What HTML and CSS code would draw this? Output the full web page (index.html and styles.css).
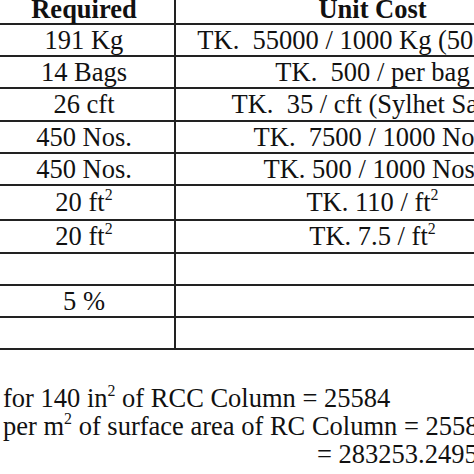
FILE: index.html
```html
<!DOCTYPE html>
<html>
<head>
<meta charset="utf-8">
<link rel="stylesheet" href="styles.css">
</head>
<body>
<div class="page">
  <div class="table">
    <div class="row head"><div class="c1">Required</div><div class="c2">Unit Cost</div></div>
    <div class="row"><div class="c1">191 Kg</div><div class="c2">TK.  55000 / 1000 Kg (50 grade)</div></div>
    <div class="row"><div class="c1">14 Bags</div><div class="c2">TK.  500 / per bag</div></div>
    <div class="row"><div class="c1">26 cft</div><div class="c2">TK.  35 / cft (Sylhet Sand)</div></div>
    <div class="row"><div class="c1">450 Nos.</div><div class="c2">TK.  7500 / 1000 Nos.</div></div>
    <div class="row"><div class="c1">450 Nos.</div><div class="c2">TK. 500 / 1000 Nos.</div></div>
    <div class="row tall"><div class="c1">20 ft<sup>2</sup></div><div class="c2">TK. 110 / ft<sup>2</sup></div></div>
    <div class="row"><div class="c1">20 ft<sup>2</sup></div><div class="c2">TK. 7.5 / ft<sup>2</sup></div></div>
    <div class="row"><div class="c1"></div><div class="c2"></div></div>
    <div class="row"><div class="c1">5 %</div><div class="c2"></div></div>
    <div class="row"><div class="c1"></div><div class="c2"></div></div>
  </div>
  <div class="notes">
    <p class="line">for 140 in<sup>2</sup> of RCC Column = 25584</p>
    <p class="line">per m<sup>2</sup> of surface area of RC Column = 25584/0.0903</p>
    <p class="line result">= 283253.2495 TK</p>
  </div>
</div>
</body>
</html>
```
FILE: styles.css
```css
html, body {
  margin: 0;
  padding: 0;
  background: #fff;
}
.page {
  width: 474px;
  height: 474px;
  overflow: hidden;
  font-family: "Liberation Serif", "Times New Roman", serif;
  font-size: 26.5px;
  color: #111;
  background: #fff;
}
.table {
  margin-top: -9px;
  margin-left: -6px;
  width: 575px;
}
.row {
  display: flex;
  height: 32.2px;
  box-sizing: border-box;
  border-bottom: 2px solid #222;
}
.row.head {
  height: 34px;
  font-weight: bold;
}
.row.tall {
  height: 35.5px;
}
.c1, .c2 {
  text-align: center;
  white-space: pre;
  line-height: 30.2px;
  box-sizing: border-box;
  overflow: visible;
}
.row.tall .c1, .row.tall .c2 {
  line-height: 33.5px;
}
.row.head .c1, .row.head .c2 {
  line-height: 28px;
  padding-top: 4px;
}
.c1 {
  width: 182px;
  flex: none;
  border-right: 2px solid #222;
}
.c2 {
  width: 393px;
  flex: none;
}
sup {
  font-size: 60%;
  line-height: 0;
  vertical-align: 0.7em;
}
.notes {
  margin-top: 34px;
}
.line {
  margin: 0;
  line-height: 28px;
  white-space: pre;
  padding-left: 3px;
}
.line.result {
  padding-left: 317px;
}
```
